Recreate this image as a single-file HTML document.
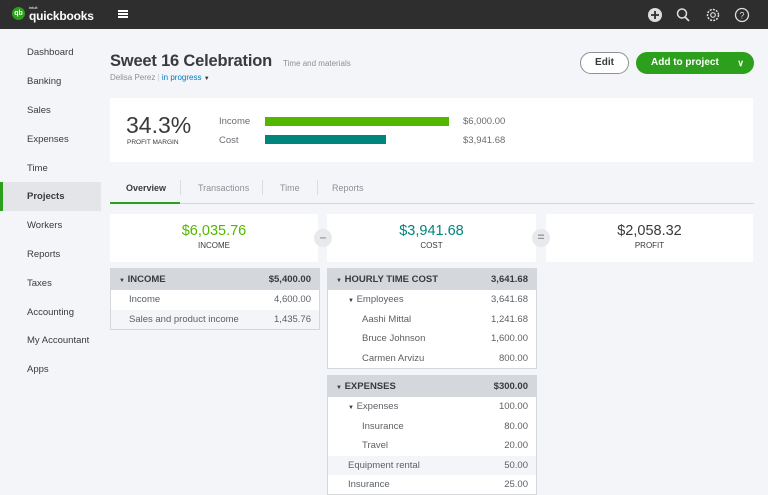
<!DOCTYPE html>
<html><head><style>
*{margin:0;padding:0;box-sizing:border-box}
body{width:768px;height:482px;overflow:hidden;background:#f4f5f8;font-family:"Liberation Sans",sans-serif;color:#393a3d;position:relative}
.a{position:absolute}
.top{left:0;top:0;width:768px;height:29px;background:#2e2e2e}
.nav{left:27px;font-size:9.5px;color:#393a3d}
.card{background:#fff}
.tbl{background:#fff;border:1px solid #d4d7dc;font-size:9.5px}
.row{position:relative;height:19.5px;line-height:19.5px;color:#5c5f63}
.row span{position:absolute;right:8px}
.hd{background:#d4d7dc;height:21px;line-height:21px;font-weight:bold;color:#393a3d;position:relative}
.hd span{position:absolute;right:8px}
.alt{background:#f4f5f8}
</style></head><body>
<div class="a top"></div>
<div class="a" style="left:12px;top:7px;width:13px;height:13px;border-radius:50%;background:#2ca01c;color:#fff;font-size:7px;font-weight:bold;text-align:center;line-height:13px">qb</div>
<div class="a" style="left:29px;top:5px;color:#fff;font-size:4px">intuit</div>
<div class="a" style="left:29px;top:9px;color:#fff;font-size:12px;font-weight:bold;letter-spacing:-.2px">quickbooks</div>
<div class="a" style="left:118px;top:10px;width:10px;height:2px;background:#fff;box-shadow:0 3px 0 #fff,0 6px 0 #fff"></div>
<svg class="a" style="left:646px;top:6px" width="110" height="18" viewBox="0 0 110 18">
<circle cx="9" cy="9" r="7" fill="#ddd"/><path d="M9 5v8M5 9h8" stroke="#2e2e2e" stroke-width="1.8"/>
<circle cx="36" cy="7.5" r="4.5" stroke="#ddd" stroke-width="1.5" fill="none"/><path d="M39 11l4 4" stroke="#ddd" stroke-width="1.7"/>
<circle cx="67" cy="9" r="5.5" stroke="#ddd" stroke-width="1.5" fill="none" stroke-dasharray="2 1.2"/><circle cx="67" cy="9" r="2.3" stroke="#ddd" stroke-width="1.2" fill="none"/>
<circle cx="96" cy="9" r="6.5" stroke="#ddd" stroke-width="1.3" fill="none"/><text x="96" y="12.5" font-size="9" fill="#ddd" text-anchor="middle" font-family="Liberation Sans">?</text>
</svg>
<div class="a" style="left:0;top:182px;width:101px;height:29px;background:#e4e5e8"></div>
<div class="a" style="left:0;top:182px;width:3px;height:29px;background:#2ca01c"></div>
<div class="a nav" style="top:47px">Dashboard</div>
<div class="a nav" style="top:76px">Banking</div>
<div class="a nav" style="top:105px">Sales</div>
<div class="a nav" style="top:134px">Expenses</div>
<div class="a nav" style="top:163px">Time</div>
<div class="a nav" style="top:191px;font-weight:bold">Projects</div>
<div class="a nav" style="top:220px">Workers</div>
<div class="a nav" style="top:249px">Reports</div>
<div class="a nav" style="top:278px">Taxes</div>
<div class="a nav" style="top:307px">Accounting</div>
<div class="a nav" style="top:335px">My Accountant</div>
<div class="a nav" style="top:364px">Apps</div>

<div class="a" style="left:110px;top:52px;font-size:16.5px;font-weight:bold;letter-spacing:-.2px">Sweet 16 Celebration</div>
<div class="a" style="left:283px;top:59px;font-size:8px;color:#8d9096">Time and materials</div>
<div class="a" style="left:110px;top:73px;font-size:8px;color:#8d9096">Delisa Perez <span style="color:#ccc">|</span> <span style="color:#0077c5">in progress</span> <span style="color:#393a3d;font-size:6px">▼</span></div>
<div class="a" style="left:580px;top:52px;width:49px;height:22px;border:1.5px solid #8d9096;border-radius:12px;font-size:10px;font-weight:bold;text-align:center;line-height:20px;background:#fff">Edit</div>
<div class="a" style="left:636px;top:52px;width:118px;height:22px;border-radius:12px;background:#2ca01c;color:#fff;font-size:10px;font-weight:bold;line-height:22px;padding-left:15px">Add to project<span style="position:absolute;right:10px;top:0;font-size:9px">∨</span></div>

<div class="a card" style="left:110px;top:98px;width:643px;height:64px"></div>
<div class="a" style="left:126px;top:112px;font-size:23px">34.3%</div>
<div class="a" style="left:127px;top:139px;font-size:6.5px">PROFIT MARGIN</div>
<div class="a" style="left:219px;top:116px;font-size:9.5px;color:#6b6c72">Income</div>
<div class="a" style="left:219px;top:135px;font-size:9.5px;color:#6b6c72">Cost</div>
<div class="a" style="left:265px;top:117px;width:184px;height:9px;background:#53b700"></div>
<div class="a" style="left:265px;top:135px;width:121px;height:9px;background:#00857c"></div>
<div class="a" style="left:463px;top:116px;font-size:9.5px;color:#6b6c72">$6,000.00</div>
<div class="a" style="left:463px;top:135px;font-size:9.5px;color:#6b6c72">$3,941.68</div>

<div class="a" style="left:110px;top:203px;width:644px;height:1px;background:#d4d7dc"></div>
<div class="a" style="left:110px;top:202px;width:70px;height:2px;background:#2ca01c"></div>
<div class="a" style="left:126px;top:183px;font-size:9px;font-weight:bold">Overview</div>
<div class="a" style="left:198px;top:183px;font-size:9px;color:#8d9096">Transactions</div>
<div class="a" style="left:280px;top:183px;font-size:9px;color:#8d9096">Time</div>
<div class="a" style="left:332px;top:183px;font-size:9px;color:#8d9096">Reports</div>
<div class="a" style="left:180px;top:180px;width:1px;height:15px;background:#dcdde0"></div>
<div class="a" style="left:262px;top:180px;width:1px;height:15px;background:#dcdde0"></div>
<div class="a" style="left:317px;top:180px;width:1px;height:15px;background:#dcdde0"></div>

<div class="a card" style="left:110px;top:214px;width:208px;height:48px;text-align:center"><div style="font-size:14.5px;color:#53b700;margin-top:9px">$6,035.76</div><div style="font-size:8px;margin-top:2px">INCOME</div></div>
<div class="a card" style="left:327px;top:214px;width:209px;height:48px;text-align:center"><div style="font-size:14.5px;color:#00857c;margin-top:9px">$3,941.68</div><div style="font-size:8px;margin-top:2px">COST</div></div>
<div class="a card" style="left:546px;top:214px;width:207px;height:48px;text-align:center"><div style="font-size:14.5px;color:#393a3d;margin-top:9px">$2,058.32</div><div style="font-size:8px;margin-top:2px">PROFIT</div></div>
<div class="a" style="left:314px;top:229px;width:18px;height:18px;border-radius:50%;background:#e8e9ec;color:#999;text-align:center;font-size:12px;line-height:17px;font-weight:bold">–</div>
<div class="a" style="left:532px;top:229px;width:18px;height:18px;border-radius:50%;background:#e8e9ec;color:#999;text-align:center;font-size:12px;line-height:17px;font-weight:bold">=</div>

<div class="a tbl" style="left:110px;top:268px;width:210px">
<div class="hd" style="padding-left:8px"><span style="font-size:6px;position:static">▼</span> INCOME<span>$5,400.00</span></div>
<div class="row" style="padding-left:18px">Income<span>4,600.00</span></div>
<div class="row alt" style="padding-left:18px">Sales and product income<span>1,435.76</span></div>
</div>
<div class="a tbl" style="left:327px;top:268px;width:210px">
<div class="hd" style="padding-left:8px"><span style="font-size:6px;position:static">▼</span> HOURLY TIME COST<span>3,641.68</span></div>
<div class="row" style="padding-left:20px"><b style="font-size:6px;color:#393a3d;font-weight:normal">▼</b> Employees<span>3,641.68</span></div>
<div class="row" style="padding-left:34px">Aashi Mittal<span>1,241.68</span></div>
<div class="row" style="padding-left:34px">Bruce Johnson<span>1,600.00</span></div>
<div class="row" style="padding-left:34px">Carmen Arvizu<span>800.00</span></div>
</div>
<div class="a tbl" style="left:327px;top:375px;width:210px;height:120px">
<div class="hd" style="padding-left:8px"><span style="font-size:6px;position:static">▼</span> EXPENSES<span>$300.00</span></div>
<div class="row" style="padding-left:20px"><b style="font-size:6px;color:#393a3d;font-weight:normal">▼</b> Expenses<span>100.00</span></div>
<div class="row" style="padding-left:34px">Insurance<span>80.00</span></div>
<div class="row" style="padding-left:34px">Travel<span>20.00</span></div>
<div class="row alt" style="padding-left:20px">Equipment rental<span>50.00</span></div>
<div class="row" style="padding-left:20px">Insurance<span>25.00</span></div>
</div>
</body></html>
